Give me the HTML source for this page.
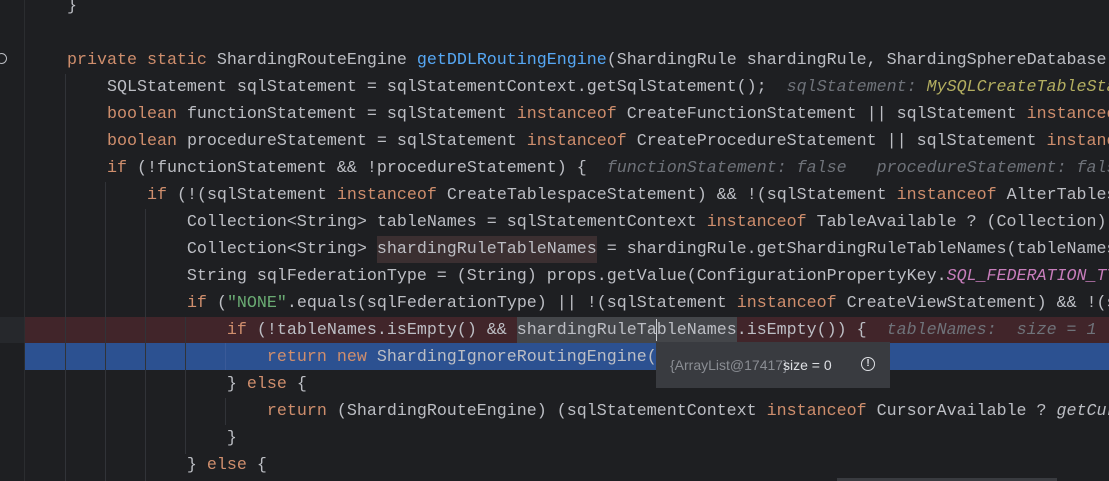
<!DOCTYPE html>
<html><head><meta charset="utf-8"><style>
html,body{margin:0;padding:0;}
body{width:1109px;height:481px;background:#1e1f22;overflow:hidden;position:relative;font-family:"Liberation Mono",monospace;font-size:16.67px;color:#bcbec4;}
.l{position:absolute;left:27px;right:0;overflow:hidden;height:27px;line-height:27px;white-space:pre;}
.k{color:#cf8e6d}.f{color:#56a8f5}.s{color:#6aab73}.c{color:#c77dbb;font-style:italic}
.h{color:#6f737a;font-style:italic}.y{color:#b3ae60;font-style:italic}.i{font-style:italic}
.g{position:absolute;width:1px;background:#313338;}
.bg{position:absolute;}
</style></head><body>
<div class="g" style="left:24px;top:0;height:481px;background:#2b2d30"></div>
<div class="bg" style="left:0;top:317px;width:24px;height:26px;background:#26282c"></div>
<div class="bg" style="left:25px;top:317px;width:1084px;height:26px;background:#41252a"></div>
<div class="bg" style="left:25px;top:343px;width:1084px;height:27px;background:#2c5191"></div>
<div class="bg" style="left:377px;top:236px;width:220px;height:27px;background:#3b2f31"></div>
<div class="bg" style="left:517px;top:317px;width:220px;height:26px;background:#44464a"></div>
<div class="g" style="left:65px;top:74px;height:407px"></div>
<div class="g" style="left:105px;top:182px;height:299px"></div>
<div class="g" style="left:145px;top:209px;height:272px"></div>
<div class="g" style="left:185px;top:317px;height:137px"></div>
<div class="g" style="left:225px;top:343px;height:27px;background:#3a5a98"></div>
<div class="g" style="left:225px;top:398px;height:27px"></div>
<div style="position:absolute;left:-4px;top:53px;width:9px;height:9px;border:1.5px solid #bcbec4;border-radius:50%"></div>

<div class="l" style="top:-7px">    }</div>
<div class="l" style="top:47px">    <span class="k">private static </span>ShardingRouteEngine <span class="f">getDDLRoutingEngine</span>(ShardingRule shardingRule, ShardingSphereDatabase database</div>
<div class="l" style="top:74px">        SQLStatement sqlStatement = sqlStatementContext.getSqlStatement();  <span class="h">sqlStatement: </span><span class="y">MySQLCreateTableStatement</span></div>
<div class="l" style="top:101px">        <span class="k">boolean </span>functionStatement = sqlStatement <span class="k">instanceof </span>CreateFunctionStatement || sqlStatement <span class="k">instanceof</span></div>
<div class="l" style="top:128px">        <span class="k">boolean </span>procedureStatement = sqlStatement <span class="k">instanceof </span>CreateProcedureStatement || sqlStatement <span class="k">instanceof</span></div>
<div class="l" style="top:155px">        <span class="k">if </span>(!functionStatement &amp;&amp; !procedureStatement) {  <span class="h">functionStatement: false   procedureStatement: false</span></div>
<div class="l" style="top:182px">            <span class="k">if </span>(!(sqlStatement <span class="k">instanceof </span>CreateTablespaceStatement) &amp;&amp; !(sqlStatement <span class="k">instanceof </span>AlterTablespace</div>
<div class="l" style="top:209px">                Collection&lt;String&gt; tableNames = sqlStatementContext <span class="k">instanceof </span>TableAvailable ? (Collection) </div>
<div class="l" style="top:236px">                Collection&lt;String&gt; shardingRuleTableNames = shardingRule.getShardingRuleTableNames(tableNames)</div>
<div class="l" style="top:263px">                String sqlFederationType = (String) props.getValue(ConfigurationPropertyKey.<span class="c">SQL_FEDERATION_TYPE</span></div>
<div class="l" style="top:290px">                <span class="k">if </span>(<span class="s">"NONE"</span>.equals(sqlFederationType) || !(sqlStatement <span class="k">instanceof </span>CreateViewStatement) &amp;&amp; !(sql</div>
<div class="l" style="top:317px">                    <span class="k">if </span>(!tableNames.isEmpty() &amp;&amp; shardingRuleTableNames.isEmpty()) {  <span class="h">tableNames:  size = 1</span></div>
<div class="l" style="top:344px">                        <span class="k">return new </span>ShardingIgnoreRoutingEngine(</div>
<div class="l" style="top:371px">                    } <span class="k">else </span>{</div>
<div class="l" style="top:398px">                        <span class="k">return </span>(ShardingRouteEngine) (sqlStatementContext <span class="k">instanceof </span>CursorAvailable ? <span class="i">getCursor</span></div>
<div class="l" style="top:425px">                    }</div>
<div class="l" style="top:452px">                } <span class="k">else </span>{</div>
<div style="position:absolute;left:656px;top:319px;width:1px;height:22px;background:#cfd1d6"></div>

<div style="position:absolute;left:656px;top:342px;width:234px;height:46px;background:#393b40;font-family:'Liberation Sans',sans-serif;font-size:14px;line-height:46px;">
<span style="position:absolute;left:14px;color:#8a8d93">{ArrayList@17417}</span>
<span style="position:absolute;left:127px;color:#dfe1e5">size = 0</span>
<span style="position:absolute;left:205px;top:15px;width:12px;height:12px;border:1.5px solid #dfe1e5;border-radius:50%;font-size:10px;line-height:12px;text-align:center;color:#dfe1e5;font-weight:bold">!</span>
</div>
<div class="bg" style="left:837px;top:478px;width:220px;height:3px;background:#393b40"></div>
</body></html>
